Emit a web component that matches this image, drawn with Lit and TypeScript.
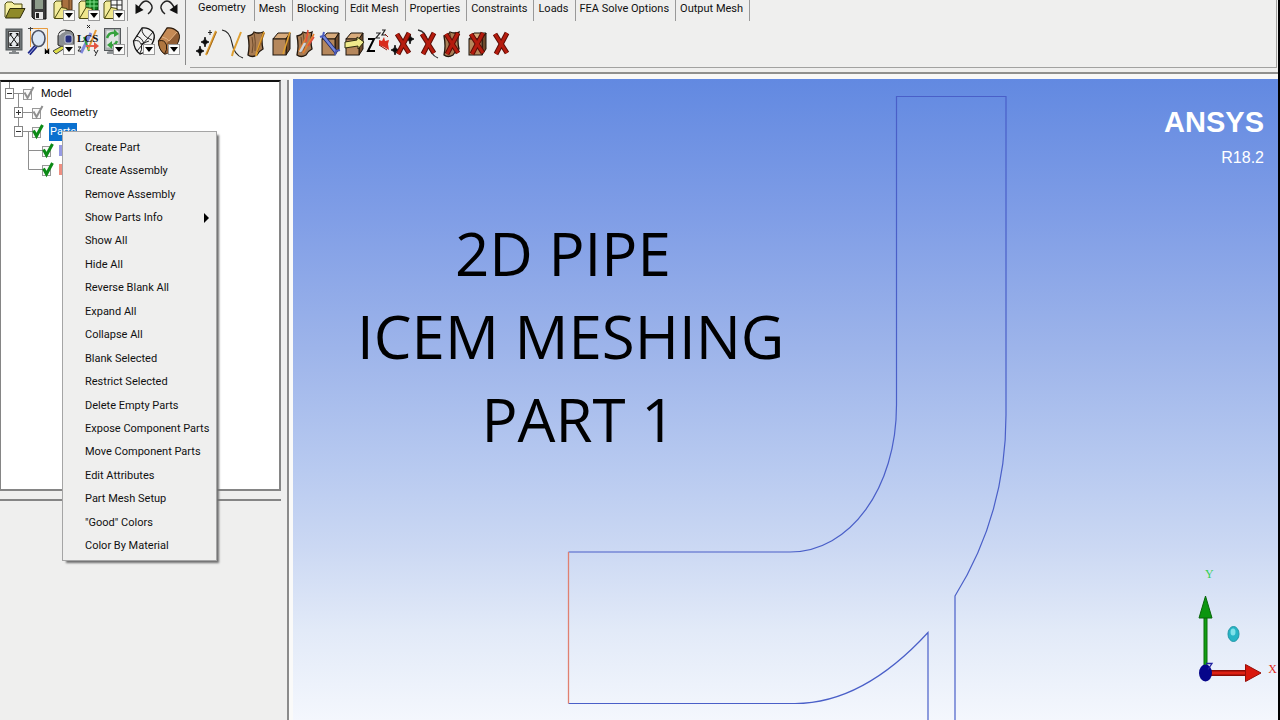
import { LitElement, html, svg, css, nothing } from "lit";
import { customElement, state } from "lit/decorators.js";
import { classMap } from "lit/directives/class-map.js";

const drop = (y: number) => svg`
  <rect x="11.5" y=${y + 0.5} width="11" height="10" fill="#fbfbfa" stroke="#9a9a9a"/>
  <path d="M13 ${y + 3}h8l-4 5z" fill="#000"/>`;

const folder = svg`
  <path d="M3 20V7l2-2h5l2 2h8v4" fill="#f5efa0" stroke="#4c4a10"/>
  <path d="M3.500 21L8 11.500h15L18 21z" fill="#8f8a2a" stroke="#2e2c08"/>`;

const folderSet = (inner: unknown) => svg`
  <path d="M2 21V6l2-2h6v4h5v13z" fill="#f3ec9c" stroke="#4c4a10"/>
  ${inner}
  <path d="M2.500 21.500L9 10.500l6 1v10z" fill="#efe68c" stroke="#4c4a10"/>
  ${drop(13)}`;

const box = svg`
  <path d="M4 11l5-6h12l-4 6z" fill="#d8ab7c" stroke="#1d140c"/>
  <path d="M17 11l4-6v16l-4 6z" fill="#6e4a2c" stroke="#1d140c"/>
  <rect x="4" y="11" width="13" height="16" fill="#b5875c" stroke="#1d140c"/>`;

const sheet = svg`
  <path d="M4 8q5-1 6-4q5 2 9 0q-2 9 0 17q-4 2-6 6q-5 3-9 0q2-9 0-19z" fill="#a97d55" stroke="#22170d" stroke-width="1.300"/>
  <path d="M8 9q2 8 0 16M10 4q2 10 1 19" fill="none" stroke="#6d4a2b"/>`;

const pencil = svg`<path d="M20 4L13 24l-1 4" fill="none" stroke="#e0a030" stroke-width="2"/><path d="M20.500 5L13.500 24" stroke="#8a4f10" stroke-width=".7"/>`;

const cross = svg`
  <path d="M6 6l12 19M18 5L7 26" fill="none" stroke="#5c0d06" stroke-width="5"/>
  <path d="M6 6l12 19M18 5L7 26" fill="none" stroke="#b51c0e" stroke-width="3"/>`;

const star = (x: number, y: number) => svg`
  <path d="M${x} ${y - 5}l1 3.500l3 1.500l-3 1.500l-1 3.500l-1-3.500l-3-1.500l3-1.500z" fill="#0b0b0b" stroke="#0b0b0b" stroke-width=".8"/>`;

interface Icon { name: string; art: unknown; }

const fileIcons: Icon[] = [
  { name: "Open Project", art: folder },
  { name: "Save Project", art: svg`
    <path d="M5 2h14v20H7l-2-2z" fill="#3c3c3c" stroke="#111"/>
    <rect x="8" y="2" width="8" height="10" fill="#8d9b8a"/>
    <rect x="8" y="15" width="8" height="7" fill="#e8e8e8"/><rect x="9" y="16" width="3" height="5" fill="#222"/>` },
  { name: "Open Geometry", art: folderSet(svg`<path d="M10 1h10v12H10z" fill="#a8703f" stroke="#4d2f16"/><path d="M17 1v12" stroke="#5f3c1e"/>`) },
  { name: "Open Mesh", art: folderSet(svg`<rect x="9" y="1" width="12" height="12" fill="#0f7d1d" stroke="#053f0b"/><path d="M9 5h12M9 9h12M13 1v12M17 1v12" stroke="#7fe08a"/>`) },
  { name: "Open Blocking", art: folderSet(svg`<path d="M9 3h11v10H9zM9 8h11M15 3v10M20 3l2-2" fill="#f8f8f8" stroke="#222"/>`) },
];

const historyIcons: Icon[] = [
  { name: "Undo", art: svg`<path d="M6 12Q12 0 18 6q5 5-2 11" fill="none" stroke="#222" stroke-width="1.400"/><path d="M3.500 7l0 10 8-4z" fill="#111"/>` },
  { name: "Redo", art: svg`<path d="M18 12Q12 0 6 6q-5 5 2 11" fill="none" stroke="#222" stroke-width="1.400"/><path d="M20.500 7l0 10-8-4z" fill="#111"/>` },
];

const viewIcons: Icon[] = [
  { name: "Fit Window", art: svg`
    <rect x="4" y="2" width="16" height="21" fill="#6f7577" stroke="#4e5456"/>
    <rect x="6.500" y="4.500" width="11" height="16" fill="#e4e8ea" stroke="#444"/>
    <path d="M8 7l8 11M16 7L8 18" stroke="#111"/>
    <path d="M7.500 6h3l-3 4zM16.500 6h-3l3 4zM7.500 19h3l-3-4zM16.500 19h-3l3-4z" fill="#111"/>
    <path d="M10 23h4v2h3v2H7v-2h3z" fill="#85898b"/>` },
  { name: "Box Zoom", art: svg`
    <path d="M3.500 1.500h17v22M3.500 1.500V20" fill="none" stroke="#e79a3c"/>
    <path d="M1 1.500h5M3.500 0v4" stroke="#444"/>
    <path d="M9 19l-7 8" stroke="#1d2687" stroke-width="4"/><path d="M9 19l-7 8" stroke="#aab4e8" stroke-width="1"/>
    <ellipse cx="11.500" cy="11.500" rx="6.500" ry="8" fill="#dbe6f5" stroke="#4b5063" stroke-width="1.600"/>
    <path d="M18.500 27v-4l1.500 2 1.500-2v4" fill="none" stroke="#000" stroke-width="1.400"/>` },
  { name: "Measure Distance", art: svg`
    <path d="M6 9q1-6 7-6l6 1q3 2 3 6v11l-8 1-8-4z" fill="#8b8f93" stroke="#222"/>
    <rect x="13" y="8" width="7" height="8" rx="2" fill="#27307e" stroke="#c4c8d8"/>
    <path d="M7 8q2-3 6-4" fill="none" stroke="#e8e8e8" stroke-width="1.500"/>
    <path d="M1 24l9-5 3 2-9 6z" fill="#dede4a" stroke="#444"/>
    ${drop(17)}` },
  { name: "Local Coordinate Systems", art: svg`
    <path d="M4 26L14 6" stroke="#7f88da" stroke-width="3"/>
    <path d="M7 10l5 14" stroke="#2f9c3c" stroke-width="2"/>
    <path d="M19 3l-8 20" stroke="#e69a34" stroke-width="2"/>
    <path d="M9 19h9" stroke="#e2604e" stroke-width="2"/><path d="M17 15l5 4-5 4z" fill="#e2533f"/>
    <text class="lcs" x="0" y="15" fill="#111">LCS</text>
    <path d="M10 -2l3 3M13 -2l-3 3M1 20h3l-3 4h3M17 23l2 3M21 23l-3 6" fill="none" stroke="#222"/>` },
  { name: "Refresh", art: svg`
    <rect x="2.500" y="1.500" width="16" height="22" fill="#a9adaf" stroke="#55595b"/>
    <rect x="4.500" y="3.500" width="12" height="17" fill="#e0e4e3"/>
    <path d="M5 11q2-6 8-5" fill="none" stroke="#35a13d" stroke-width="2.500"/><path d="M12 2l5 5-5 3z" fill="#35a13d"/>
    <path d="M15 14q-2 5-6 4" fill="none" stroke="#35a13d" stroke-width="2.500"/><path d="M10 14l-5 4 5 4z" fill="#35a13d"/>
    <path d="M7 24h8v3H5v-2z" fill="#8d9193"/>
    ${drop(17)}` },
];

const displayIcons: Icon[] = [
  { name: "Wireframe Display", art: svg`
    <path d="M1.500 14L10 1q6-1 11 4q3 5-1 12l-7 8-5 2q-6-4-6.500-13z" fill="#f2f2f1" stroke="#111" stroke-width="1.300"/>
    <path d="M1.500 14q6-2 8 4q1 5-2 9M4 9q6 1 8 8M10 1q-1 8 10 12M21 5L5 24M9 17l8-3" fill="none" stroke="#222"/>
    ${drop(17)}` },
  { name: "Solid Display", art: svg`
    <path d="M1.500 14L10 1q6-1 11 4q3 5-1 12l-7 8-5 2q-6-4-6.500-13z" fill="#c58a55" stroke="#2a1a0c" stroke-width="1.300"/>
    <path d="M10 16L20 5q3 5 0 12l-7 8-5 2q4-6 2-11z" fill="#8f5c33"/>
    <path d="M1.500 14q6-2 8 4q1 5-2 9q-6-4-6-13z" fill="#b0763f" stroke="#2a1a0c"/>
    <path d="M5 10q5 1 7 4l8-9" fill="none" stroke="#e3b384"/>
    ${drop(17)}` },
];

const geometryIcons: Icon[] = [
  { name: "Create Point", art: svg`${star(5, 23)}${star(10, 14)}<path d="M15 2v5M13 4.500h4" stroke="#222"/><path d="M21 3L11 27" stroke="#e0a030" stroke-width="2"/><path d="M21.500 4L12 26" stroke="#8a4f10" stroke-width=".7"/>` },
  { name: "Create/Modify Curve", art: svg`<path d="M2 2q8 1 10 13t11 15" fill="none" stroke="#222" stroke-width="1.200"/><path d="M21 4l-8 20-1 4" fill="none" stroke="#e0a030" stroke-width="2"/>` },
  { name: "Create/Modify Surface", art: svg`${sheet}${pencil}` },
  { name: "Create Body", art: svg`${box}<path d="M21 4l-7 22" stroke="#e0a030" stroke-width="1.600"/>` },
  { name: "Create/Modify Faceted", art: svg`${sheet}<path d="M6 23L16 5M10 25L21 6" stroke="#e77e2a" stroke-width="1.600"/><path d="M15 2l-2 12M21 9l-6 9" stroke="#e0503c" stroke-width="1.600"/><path d="M7 24l5-9" stroke="#ccd3dc" stroke-width="2.500"/>` },
  { name: "Repair Geometry", art: svg`${box}<path d="M5 8l13 16" stroke="#1e2764" stroke-width="4"/><path d="M5 8l13 16" stroke="#7587dc" stroke-width="2.500"/><path d="M2 9l3-1 1-4M17 27l1-4 4-1" fill="none" stroke="#4a5bbd" stroke-width="2"/>` },
  { name: "Transform Geometry", art: svg`${box}<path d="M3 14l12-2V9l7 5-6 7v-3L3 20z" fill="#f0eb8c" stroke="#2c2a0c"/>` },
  { name: "Restore Dormant Entities", art: svg`<path d="M1 11h6L1 23h7" fill="none" stroke="#000" stroke-width="2"/><path d="M9 5h4l-4 5h4M15 2h3l-3 5h4" fill="none" stroke="#222" stroke-width="1.200"/><path d="M12 12l3 1 2-4 1 4 4-1-1 4 1 6-5-3-5-2z" fill="#d92b1c"/><path d="M18 6l3 3M12 17l8 5" stroke="#8c160c"/>` },
  { name: "Delete Point", art: svg`${star(19, 11)}${star(4, 22)}${cross}` },
  { name: "Delete Curve", art: svg`<path d="M2 2q8 1 10 13t10 15" fill="none" stroke="#333" stroke-width="1.300"/>${cross}` },
  { name: "Delete Surface", art: svg`${sheet}${cross}` },
  { name: "Delete Body", art: svg`${box}${cross}` },
  { name: "Delete Any Entity", art: cross },
];

const tabs = ["Geometry", "Mesh", "Blocking", "Edit Mesh", "Properties", "Constraints", "Loads", "FEA Solve Options", "Output Mesh"];

const menuItems = [
  "Create Part", "Create Assembly", "Remove Assembly", "Show Parts Info", "Show All", "Hide All",
  "Reverse Blank All", "Expand All", "Collapse All", "Blank Selected", "Restrict Selected",
  "Delete Empty Parts", "Expose Component Parts", "Move Component Parts", "Edit Attributes",
  "Part Mesh Setup", "\"Good\" Colors", "Color By Material",
];

interface Node { label: string; level: number; open?: boolean; full: boolean; selected?: boolean; tint?: string; }

const nodes: Node[] = [
  { label: "Model", level: 0, open: true, full: false },
  { label: "Geometry", level: 1, open: false, full: false },
  { label: "Parts", level: 1, open: true, full: true, selected: true },
  { label: "", level: 2, full: true, tint: "blue" },
  { label: "", level: 2, full: true, tint: "red" },
];

@customElement("icon-strip")
class IconStrip extends LitElement {
  static properties = { icons: { attribute: false }, tall: { type: Boolean } };
  declare icons: Icon[];
  declare tall: boolean;

  static styles = css`
    :host { display: flex; justify-content: space-between; gap: 1px; }
    :host([spread]) { gap: 0; }
    button { display: block; border: 0; padding: 0; background: none; width: 24px; }
    svg { display: block; width: 24px; overflow: visible; }
    .lcs { font: bold 11px "Liberation Serif", serif; }
  `;

  render() {
    const h = this.tall ? 30 : 24;
    return this.icons.map((i) => html`
      <button type="button" aria-label=${i.name}>
        <svg viewBox="0 0 24 ${h}" height=${h} fill="none" aria-hidden="true">${i.art}</svg>
      </button>`);
  }
}

@customElement("model-tree")
class ModelTree extends LitElement {
  static styles = css`
    :host { display: block; position: relative; padding: 2px 0; }
    .lines { position: absolute; left: 0; top: 0; }
    .row { position: relative; display: flex; align-items: center; height: 19px; padding-left: 4px; }
    .level1 { padding-left: 13px; }
    .level2 { padding-left: 22px; }
    .expander { width: 9px; height: 11px; padding: 0; border: 0; margin-right: 8px; background: none; }
    .leaf { width: 9px; margin-right: 9px; }
    .expander svg { display: block; }
    .tick { display: grid; width: 12px; height: 16px; margin-right: 6px; }
    .tick > * { grid-area: 1 / 1; margin: 0; width: 12px; height: 16px; }
    .tick svg { overflow: visible; }
    .tick input { opacity: 0; }
    .label { padding: 0 1px; line-height: 18px; }
    .selected { background: #0a70cf; color: #fff; }
    .swatch { width: 3px; height: 11px; opacity: .7; }
    .blue { background: #6a6fd8; }
    .red { background: #e8604c; }
  `;

  render() {
    return html`
      <svg class="lines" width="60" height="100" fill="none" stroke="#8e8e8e" aria-hidden="true">
        <path d="M8.500 0V7M13 11.500H23M17.500 11V45M18 30.500H32M18 49.500H32M27.500 50V87.500H42M27 68.500H42"/>
      </svg>
      ${nodes.map((n, i) => html`
        <div class="row level${n.level}">
          ${n.open === undefined ? html`<span class="leaf"></span>` : html`
            <button class="expander" type="button" aria-label=${(n.open ? "Collapse " : "Expand ") + n.label}>
              <svg width="9" height="11"><rect x=".5" y=".5" width="8" height="10" fill="#fff" stroke="#858585"/>
              <path d="M2 5.500h5${n.open ? "" : "M4.500 3v5"}" stroke="#333"/></svg>
            </button>`}
          <span class="tick">
            <svg viewBox="0 0 12 16" aria-hidden="true">
              <rect x="1.500" y="3.500" width="8" height="10" fill="#fafafa" stroke="#999"/>
              <path d="M2.500 6.500l3 5.500L11.500 1" fill="none" stroke=${n.full ? "#0c8a16" : "#8f8f8f"} stroke-width=${n.full ? 3 : 2}/>
            </svg>
            <input id="n${i}" type="checkbox" checked aria-label=${n.label || "Part"}>
          </span>
          ${n.tint
            ? html`<span class="swatch ${n.tint}"></span>`
            : html`<label for="n${i}" class=${classMap({ label: true, selected: !!n.selected })}>${n.label}</label>`}
        </div>`)}
    `;
  }
}

@customElement("part-menu")
class PartMenu extends LitElement {
  static styles = css`
    :host {
      box-sizing: border-box; display: grid; grid-auto-rows: 1fr; height: 430px; padding: 4px 0 2px;
      background: #efefee; border: 1px solid #a5a5a5; box-shadow: 3px 3px 2px -1px #6f6f6f;
    }
    button {
      display: flex; align-items: center; justify-content: space-between; padding: 0 8px 0 22px;
      border: 0; background: none; font: inherit; color: #111; text-align: left; white-space: nowrap;
    }
  `;

  render() {
    return menuItems.map((m) => html`
      <button type="button" role="menuitem"><span>${m}</span>
        ${m === "Show Parts Info" ? html`<svg width="5" height="10" aria-hidden="true"><path d="M0 0l5 5-5 5z" fill="#000"/></svg>` : nothing}
      </button>`);
  }
}

@customElement("mesh-viewport")
class MeshViewport extends LitElement {
  static styles = css`
    :host {
      display: block; position: relative; overflow: hidden;
      background: linear-gradient(#6289e1, #7f9de6 21%, #9db4ea 42%, #b8caf0 61%, #cbd8f3 73%, #e2eaf8 86%, #f4f7fd);
    }
    .scene { position: absolute; inset: 0; width: 100%; height: 100%; }
    .axis { font: 12px "Liberation Serif", serif; }
    .title {
      position: absolute; left: 64px; top: 133px; margin: 0; color: #000; text-align: center; white-space: pre;
      font: 60px/83px "Open Sans", "Noto Sans", sans-serif;
    }
    .brand { position: absolute; right: 14px; top: 21px; color: #fff; text-align: right; }
    .name { font: bold 29px/44px "Liberation Sans", sans-serif; }
    .release { font: 16px/28px "Liberation Sans", sans-serif; }
  `;

  render() {
    return html`
      <svg class="scene" viewBox="293 79 985 641" preserveAspectRatio="xMidYMid slice" fill="none" role="img" aria-label="Pipe geometry">
        <g stroke="#4a5fc8" stroke-width="1.200">
          <path d="M568.500 552H790C850 552 896.500 488 896.500 405V96.500H1006V415C1006 485 988 543 955 596V720"/>
          <path d="M568.500 703.500H795C845 703.500 889 675 928 632.500V720"/>
        </g>
        <path d="M568.500 552V703.500" stroke="#e08070" stroke-width="1.300"/>
        <path d="M1205.500 668V616" stroke="#0a6a0a" stroke-width="4"/>
        <path d="M1205.500 668V616" stroke="#12a012" stroke-width="2"/>
        <path d="M1205.500 596l6.500 22h-13z" fill="#0b960f" stroke="#08650a"/>
        <path d="M1210 673h36" stroke="#8c0a06" stroke-width="6"/>
        <path d="M1210 673h36" stroke="#dd2014" stroke-width="3"/>
        <path d="M1245.500 664.500v17L1261 673z" fill="#d9170c" stroke="#970d07"/>
        <ellipse cx="1205.500" cy="673" rx="6.500" ry="8.500" fill="#06068a"/>
        <path d="M1206 663.500h6l-4 6" stroke="#2020a0" stroke-width="1.300"/>
        <ellipse cx="1233.500" cy="634" rx="5.500" ry="7.500" fill="#27b5c6" stroke="#2096a6"/>
        <ellipse cx="1233" cy="632" rx="2.500" ry="3.500" fill="#7fe2ea"/>
        <text class="axis" x="1205" y="578" fill="#35cf55">Y</text>
        <text class="axis" x="1277" y="673" text-anchor="end" fill="#e02a20">X</text>
      </svg>
      <h1 class="title">${"2D PIPE \nICEM MESHING\n PART 1"}</h1>
      <div class="brand"><div class="name">ANSYS</div><div class="release">R18.2</div></div>
    `;
  }
}

@customElement("app-root")
class AppRoot extends LitElement {
  @state() private tab = "Geometry";

  static styles = css`
    :host {
      display: grid; grid-template-rows: auto 1fr; height: 100vh; overflow: hidden; box-sizing: border-box;
      border-right: 2px solid #000; background: #efefee; color: #111;
      font: 11px/16px Roboto, "Liberation Sans", Arial, sans-serif;
    }
    header { display: flex; height: 79px; box-sizing: border-box; border-bottom: 5px solid #f8f8f7; overflow: hidden; }
    .bar { display: flex; flex: 1; height: 74px; box-sizing: border-box; border-bottom: 2px solid #8f8f8d; }
    .tools {
      display: grid; grid-template-columns: auto auto; align-content: end; row-gap: 6px; height: 65px;
      box-sizing: border-box; padding: 0 4px 8px 2px; border-right: 1px solid #8a8a8a; margin-right: 4px;
    }
    .divided { border-left: 1px solid #999; margin-left: 1px; padding-left: 4px; }
    .panel {
      flex: 1; min-width: 0; height: 68px; box-sizing: border-box; margin-right: 1px;
      border: solid #a2a2a0; border-width: 0 1px 1px 0;
    }
    .tabs { display: flex; height: 21px; }
    .tab {
      border: 0; border-right: 1px solid #999; background: none; font: inherit; color: #111;
      padding: 0 6px 4px 4px; white-space: nowrap;
    }
    .tab.active { padding: 0 8px 8px; }
    .tabs::after { content: ""; flex: 1; }
    .icons { width: 318px; margin: 7px 0 0 5px; }
    main { display: grid; grid-template-columns: 293px 1fr; min-height: 0; }
    .side {
      position: relative; display: grid; grid-template-rows: 411px 1fr; box-sizing: border-box;
      padding: 1px 8px 0 0; border-right: 4px solid #fafaf9;
    }
    .side::after { content: ""; position: absolute; right: 0; top: 1px; bottom: 0; width: 2px; background: #8b8b8b; }
    model-tree {
      background: #fff; border: solid #858585; border-width: 2px 2px 2px 1px; border-top-color: #111;
    }
    .data { margin-top: 8px; border-top: 2px solid #858585; }
    part-menu { position: absolute; left: 62px; top: 52px; width: 155px; }
  `;

  render() {
    return html`
      <header>
        <div class="bar">
          <div class="tools">
            <icon-strip .icons=${fileIcons}></icon-strip>
            <icon-strip class="divided" .icons=${historyIcons}></icon-strip>
            <icon-strip tall .icons=${viewIcons}></icon-strip>
            <icon-strip tall class="divided" .icons=${displayIcons}></icon-strip>
          </div>
          <div class="panel">
            <div class="tabs" role="tablist">
              ${tabs.map((t) => html`
                <button type="button" role="tab" aria-selected=${t === this.tab}
                  class=${classMap({ tab: true, active: t === this.tab })}
                  @click=${() => (this.tab = t)}>${t}</button>`)}
            </div>
            <icon-strip spread tall class="icons" .icons=${geometryIcons}></icon-strip>
          </div>
        </div>
      </header>
      <main>
        <div class="side">
          <model-tree></model-tree>
          <div class="data"></div>
          <part-menu role="menu"></part-menu>
        </div>
        <mesh-viewport></mesh-viewport>
      </main>
    `;
  }
}
